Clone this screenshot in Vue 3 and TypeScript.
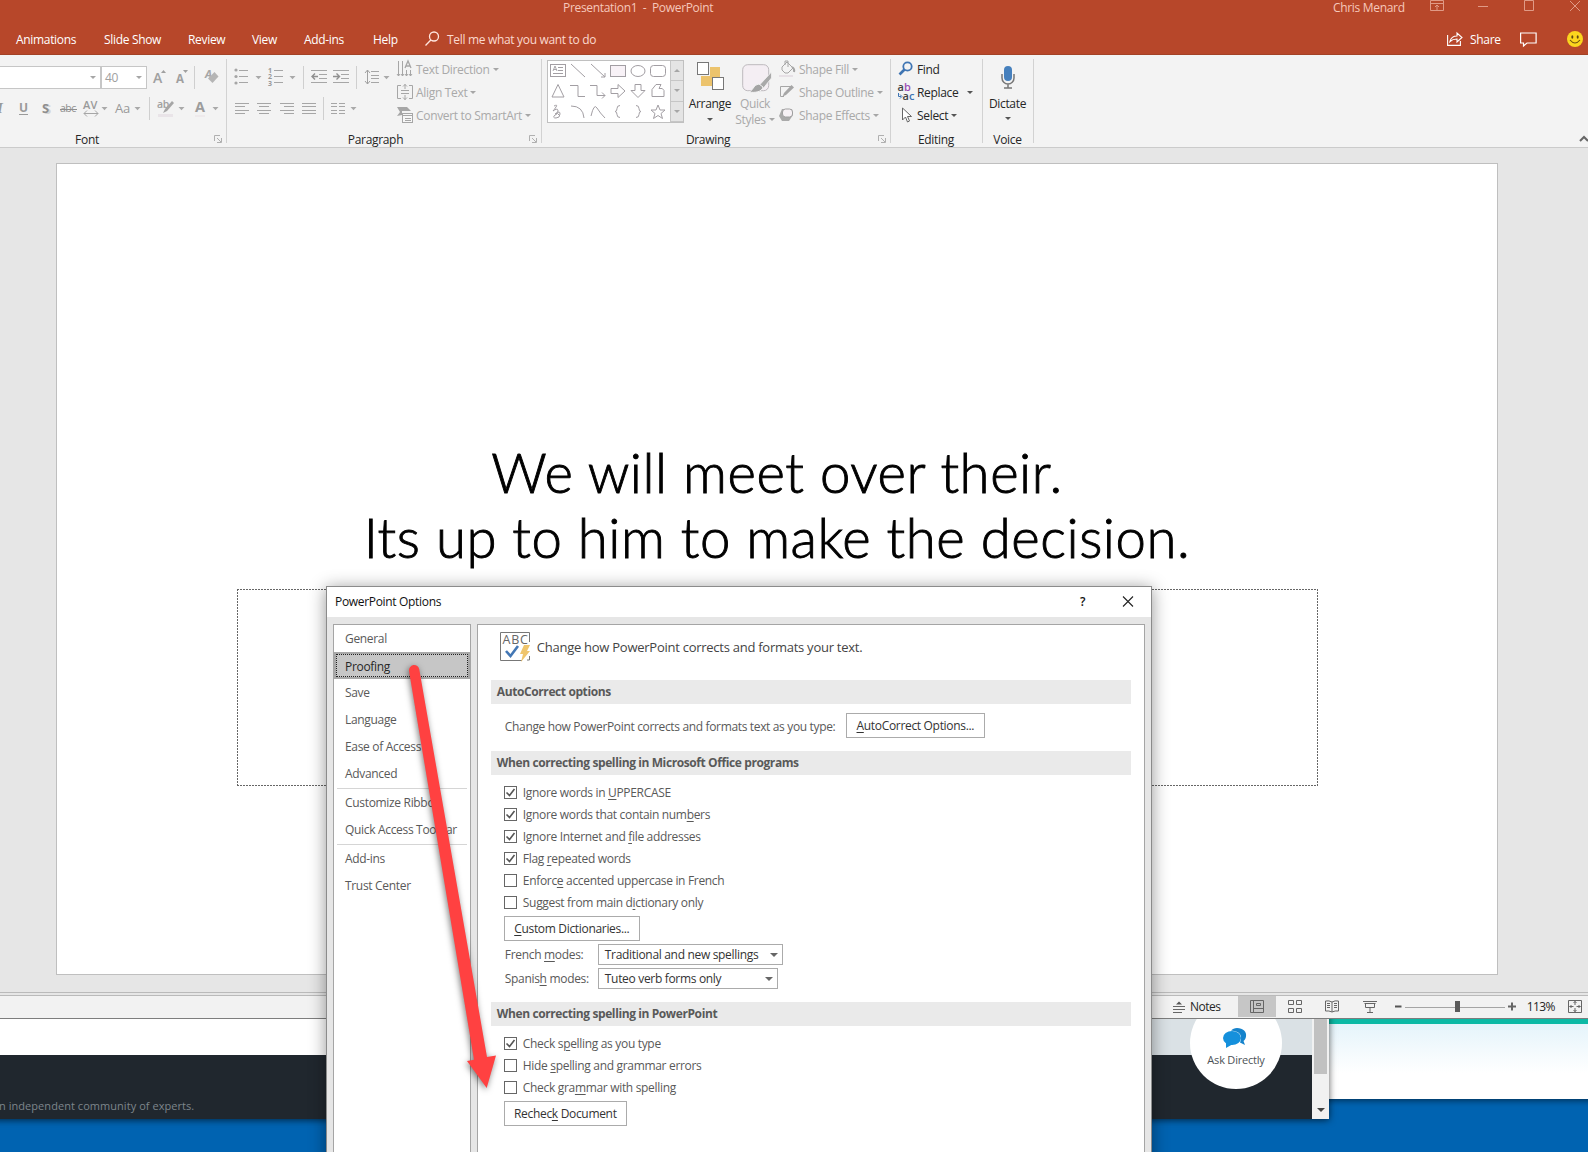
<script setup lang="ts">
interface Tool {
  gap: number
  w: number
  icon: string
}

const t = (gap: number, w: number, icon: string): Tool => ({ gap, w, icon })

const caret = '<path d="M-.5 10h6l-3 3.200z" fill="#a9a9a9"/>'
const rule = '<path d="M.5 0v23" stroke="#cfcfcf"/>'
const lines = (rows: number[][]): string =>
  rows.map(([x1, x2, y]) => `<path d="M${x1} ${y}.5H${x2}" stroke="#a6a6a6"/>`).join('')

const icons: Record<string, string> = {
  caret,
  rule,
  grow: '<text x="0" y="17" font-size="14" font-weight="600" fill="#a0a0a0">A</text><path d="M8 7l2.500-3L13 7z" fill="#a0a0a0"/>',
  shrink: '<text x="0" y="17" font-size="11.500" font-weight="700" fill="#a0a0a0">A</text><path d="M7 4h5l-2.500 3z" fill="#a0a0a0"/>',
  clear: '<text x="1" y="12" font-size="11" font-style="italic" font-weight="700" fill="#a6a6a6">A</text><path d="M10.500 6l4 4.500-6 6.500L4 12.500z" fill="#b5b5b5"/>',
  italic: '<text x="-3" y="16" font-size="15" font-style="italic" font-weight="700" font-family="Liberation Serif,serif" fill="#999">I</text>',
  underline: '<text x="0" y="15" font-size="12" font-weight="700" fill="#9a9a9a">U</text><path d="M0 17.500h9" stroke="#9a9a9a"/>',
  shadow: '<text x="2" y="17" font-size="13" font-weight="700" fill="#d5d5d5">S</text><text x="0" y="16" font-size="13" font-weight="700" fill="#8e8e8e">S</text>',
  strike: '<text x="0" y="15" font-size="10.500" textLength="16" fill="#8f8f8f">abc</text><path d="M0 12.500h17" stroke="#8f8f8f"/>',
  spacing: '<text x="0" y="12" font-size="11" font-weight="600" textLength="14" fill="#9a9a9a">AV</text><path d="M1 16.500h14M4 13.500l-3 3 3 3M12 13.500l3 3-3 3" stroke="#a6a6a6" fill="none"/>',
  casing: '<text x="0" y="16" font-size="13" textLength="15" fill="#999">Aa</text>',
  highlight: '<text x="0" y="11" font-size="10.500" font-weight="600" fill="#a0a0a0">ab</text><path d="M15 4l-7 8-2 4 4-2 7-8z" fill="#a6a6a6"/><path d="M1 17h15v3H1z" fill="#e9e4e8"/>',
  fontColor: '<text x="0" y="15" font-size="14.500" font-weight="700" fill="#9c9c9c">A</text><path d="M0 18h10v2H0z" fill="#eeeaec"/>',
  bullets: '<g fill="#a6a6a6"><circle cx="2" cy="4" r="1.600"/><circle cx="2" cy="10.500" r="1.600"/><circle cx="2" cy="17" r="1.600"/></g>' + lines([[5, 14, 4], [5, 14, 10], [5, 14, 16]]),
  numbers: '<g font-size="7" font-weight="700" fill="#999"><text x="0" y="6.500">1</text><text x="0" y="13">2</text><text x="0" y="19.500">3</text></g>' + lines([[6, 15, 4], [6, 15, 10], [6, 15, 16]]),
  outdent: lines([[0, 16, 4], [8, 16, 8], [8, 16, 12], [0, 16, 16]]) + '<path d="M1 10.500h6M4 7.500l-3 3 3 3" stroke="#8f8f8f" stroke-width="1.400" fill="none"/>',
  indent: lines([[0, 16, 4], [8, 16, 8], [8, 16, 12], [0, 16, 16]]) + '<path d="M0 10.500h6M3.500 7.500l3 3-3 3" stroke="#8f8f8f" stroke-width="1.400" fill="none"/>',
  leading: lines([[6, 14, 5], [6, 14, 9], [6, 14, 12], [6, 14, 16]]) + '<path d="M2.500 4v14M0 7l2.500-3L5 7M0 15l2.500 3L5 15" stroke="#a0a0a0" fill="none"/>',
  left: lines([[0, 14, 6], [0, 10, 9], [0, 14, 13], [0, 10, 16]]),
  center: lines([[0, 14, 6], [2, 12, 9], [0, 14, 13], [2, 12, 16]]),
  right: lines([[0, 14, 6], [4, 14, 9], [0, 14, 13], [4, 14, 16]]),
  justify: lines([[0, 14, 6], [0, 14, 9], [0, 14, 13], [0, 14, 16]]),
  columns: lines([[0, 6, 6], [8, 14, 6], [0, 6, 9], [8, 14, 9], [0, 6, 13], [8, 14, 13], [0, 6, 16], [8, 14, 16]]),
}

const fontTop: Tool[] = [t(6, 12, 'grow'), t(11, 11, 'shrink'), t(7, 1, 'rule'), t(9, 16, 'clear')]
const fontBottom: Tool[] = [
  t(0, 5, 'italic'), t(14, 9, 'underline'), t(14, 10, 'shadow'), t(8, 17, 'strike'), t(6, 16, 'spacing'),
  t(3, 5, 'caret'), t(8, 16, 'casing'), t(4, 5, 'caret'), t(9, 1, 'rule'), t(7, 17, 'highlight'),
  t(5, 5, 'caret'), t(11, 11, 'fontColor'), t(7, 5, 'caret'),
]
const paraTop: Tool[] = [
  t(7, 14, 'bullets'), t(8, 5, 'caret'), t(7, 16, 'numbers'), t(6, 5, 'caret'), t(8, 1, 'rule'),
  t(7, 16, 'outdent'), t(6, 16, 'indent'), t(7, 1, 'rule'), t(8, 14, 'leading'), t(5, 5, 'caret'),
]
const paraBottom: Tool[] = [
  t(8, 14, 'left'), t(8, 14, 'center'), t(9, 14, 'right'), t(8, 14, 'justify'), t(7, 1, 'rule'),
  t(7, 14, 'columns'), t(6, 5, 'caret'),
]

const shapes: string[] = [
  '<rect x="1.500" y="3.500" width="15" height="12"/><path d="M9 6.500h5M9 9.500h5M4 12.500h10"/><path d="M4 10l2-5 2 5M4.500 8.500h3" stroke-width=".9"/>',
  '<path d="M2 3l14 13"/>',
  '<path d="M2 3l14 13M16 12v4h-4"/>',
  '<rect x="1.500" y="4.500" width="15" height="11" fill="#f8f2f7"/>',
  '<ellipse cx="9" cy="10" rx="7" ry="5.500"/>',
  '<rect x="1.500" y="4.500" width="15" height="11" rx="3"/>',
  '<path d="M9 3.500l6 12.500H3z"/>',
  '<path d="M1 4.500h8v11h7"/>',
  '<path d="M1 4.500h7v10h8M13 11.500l3 3-3 3"/>',
  '<path d="M2 7.500h7V3.500l7 6.500-7 6.500v-4H2z"/>',
  '<path d="M6 3.500h6v6h4L9 16.500 2 9.500h4z"/>',
  '<path d="M3 8.500l4-5h5l-2 4q4-1 5 2v6H3z"/>',
  '<path d="M5 4q4-2 2 1t-3 4q4-3 5-1t-3 4M7 12q4-4 4 0t-4 4-1-3 4 0"/>',
  '<path d="M2 4q12 0 13 12"/>',
  '<path d="M2 14Q5 1 8 6t8 10"/>',
  '<path d="M11 3.500q-3 0-3 3t-2 3q2 0 2 3t3 3"/>',
  '<path d="M7 3.500q3 0 3 3t2 3q-2 0-2 3t-3 3"/>',
  '<path d="M9 3l2 5h5l-4 3.500 1.500 5L9 13.500l-4.500 3 1.500-5L2 8h5z"/>',
]

type NavItem = { label: string; active?: boolean; rule?: boolean }
const nav: NavItem[] = [
  { label: 'General' }, { label: 'Proofing', active: true }, { label: 'Save' }, { label: 'Language' },
  { label: 'Ease of Access' }, { label: 'Advanced' }, { label: 'Customize Ribbon', rule: true },
  { label: 'Quick Access Toolbar' }, { label: 'Add-ins', rule: true }, { label: 'Trust Center' },
]

type Check = { pre: string; key: string; post: string; on: boolean }
const c = (pre: string, key: string, post: string, on: boolean): Check => ({ pre, key, post, on })
const officeChecks: Check[] = [
  c('Ignore words in ', 'U', 'PPERCASE', true),
  c('Ignore words that contain num', 'b', 'ers', true),
  c('Ignore Internet and ', 'f', 'ile addresses', true),
  c('Flag ', 'r', 'epeated words', true),
  c('Enforc', 'e', ' accented uppercase in French', false),
  c('Suggest from main d', 'i', 'ctionary only', false),
]
const pptChecks: Check[] = [
  c('Check s', 'p', 'elling as you type', true),
  c('Hide ', 's', 'pelling and grammar errors', false),
  c('Check gra', 'm', 'mar with spelling', false),
]
const tabs = ['Animations', 'Slide Show', 'Review', 'View', 'Add-ins', 'Help']
</script>

<template>
  <div class="desktop">
    <div class="back-window"></div>

    <div class="browser">
      <div class="page">
        <div class="page-top"></div>
        <div class="page-foot">n independent community of experts.</div>
        <div class="ask">
          <svg width="24" height="20" viewBox="0 0 24 20">
            <path d="M14 0c6 0 10 4 9 8.500-.3 2-1.300 3.500-2.500 4.500l1.500 4-5-2.500C20 8 17 3 8 2.500 9.500 1 11.500 0 14 0z" fill="#1583cc" />
            <ellipse cx="9" cy="10" rx="9" ry="7" fill="#1590dc" /><path d="M3 14v6l7-4z" fill="#1590dc" />
          </svg>
          <span>Ask Directly</span>
        </div>
      </div>
      <div class="scroll"><div class="thumb"></div><i></i></div>
    </div>

    <div class="ppt">
      <header class="titlebar">
        <span class="doc">Presentation1&nbsp; -&nbsp; PowerPoint</span>
        <span class="user">Chris Menard</span>
        <svg class="winbtns" width="152" height="12" viewBox="0 0 152 12" fill="none" stroke="#e09a86">
          <path d="M.5.5h13v10H.5zM.5 3.500h13M7 10V5M5 7l2-2 2 2M48 6.500h10M94.500.5h9v10h-9zM140 1l10 10M150 1l-10 10" />
        </svg>
      </header>
      <nav class="tabs">
        <span v-for="tab in tabs" :key="tab" :class="'tab-' + tab.charAt(0) + tab.length">{{ tab }}</span>
        <svg class="lens" width="16" height="16" viewBox="0 0 16 16" fill="none" stroke="#ffe6df" stroke-width="1.300">
          <circle cx="9" cy="5.500" r="4.500" /><path d="M5.800 9L.5 14.500" />
        </svg>
        <span class="tell">Tell me what you want to do</span>
        <svg class="share-ic" width="16" height="14" viewBox="0 0 16 14" fill="none" stroke="#fff" stroke-width="1.100">
          <path d="M.6 3v10.400h12.800V9" /><path d="M3 9.500C4 5.500 6.500 4 10 4V1l5 4.500L10 10V7C7 7 5 7.500 3 9.500z" />
        </svg>
        <span class="share">Share</span>
        <svg class="comment" width="18" height="15" viewBox="0 0 18 15" fill="none" stroke="#fff" stroke-width="1.200">
          <path d="M.6 1h15.500v10H7L3.500 14v-3H.6z" />
        </svg>
        <svg class="smile" width="16" height="16" viewBox="0 0 16 16">
          <circle cx="8" cy="8" r="8" fill="#fbd51e" />
          <ellipse cx="5.300" cy="6" rx="1" ry="1.800" fill="#5f4512" /><ellipse cx="10.700" cy="6" rx="1" ry="1.800" fill="#5f4512" />
          <path d="M3 9q5 6 10 0" fill="none" stroke="#6b4c10" stroke-width="1.100" />
        </svg>
      </nav>

      <section class="ribbon">
        <div class="group g-font">
          <div class="body">
            <div class="tools top">
              <div class="combo face"><i class="car"></i></div>
              <div class="combo size"><span>40</span><i class="car"></i></div>
              <svg v-for="(k, i) in fontTop" :key="i" :width="k.w" height="23" :style="{ marginLeft: k.gap + 'px' }" v-html="icons[k.icon]"></svg>
            </div>
            <div class="tools bottom">
              <svg v-for="(k, i) in fontBottom" :key="i" :width="k.w" height="23" :style="{ marginLeft: k.gap + 'px' }" v-html="icons[k.icon]"></svg>
            </div>
          </div>
          <div class="caption">Font</div>
          <svg class="launch" width="8" height="8" viewBox="0 0 8 8"><path d="M.5 6V.5H6M3 3l4 4M7.500 3v4.500H3" fill="none" stroke="#b0b0b0" /></svg>
        </div>

        <div class="group g-para">
          <div class="body cols">
            <div class="left">
              <div class="tools top">
                <svg v-for="(k, i) in paraTop" :key="i" :width="k.w" height="23" :style="{ marginLeft: k.gap + 'px' }" v-html="icons[k.icon]"></svg>
              </div>
              <div class="tools bottom">
                <svg v-for="(k, i) in paraBottom" :key="i" :width="k.w" height="23" :style="{ marginLeft: k.gap + 'px' }" v-html="icons[k.icon]"></svg>
              </div>
            </div>
            <div class="stack off">
              <div>
                <svg width="16" height="16" viewBox="0 0 16 16" fill="none" stroke="#a6a6a6"><path d="M1.500 0v15M5.500 0v15M9.500 9v6M13.500 9v6M0 13l1.500 2L3 13M4 13l1.500 2L7 13M8 13l1.500 2 1.500-2M12 13l1.500 2 1.500-2" /><path d="M8 7l3-7 3 7M9 5h4" stroke-width="1.300" /></svg>
                <span>Text Direction</span><i class="car"></i>
              </div>
              <div>
                <svg width="16" height="16" viewBox="0 0 16 16" fill="none" stroke="#a6a6a6"><path d="M4 1.500H.5v13H4M12 1.500h3.500v13H12M4 6.500h8M4 9.500h8M8 0v5M8 16v-5M6 2.500L8 .5l2 2M6 13.500l2 2 2-2" /></svg>
                <span>Align Text</span><i class="car"></i>
              </div>
              <div>
                <svg width="16" height="16" viewBox="0 0 16 16"><path d="M0 0h10l4 4H5v4L0 9l3-4z" fill="#a6a6a6" /><rect x="5.500" y="6.500" width="10" height="9" fill="#f7f7f7" stroke="#a6a6a6" /><path d="M5 8.500h10M8 11.500h6M8 13.500h6" stroke="#a6a6a6" /></svg>
                <span>Convert to SmartArt</span><i class="car"></i>
              </div>
            </div>
          </div>
          <div class="caption">Paragraph</div>
          <svg class="launch" width="8" height="8" viewBox="0 0 8 8"><path d="M.5 6V.5H6M3 3l4 4M7.500 3v4.500H3" fill="none" stroke="#b0b0b0" /></svg>
        </div>

        <div class="group g-draw">
          <div class="body cols">
            <div class="gallery">
              <div class="cells">
                <svg v-for="(s, i) in shapes" :key="i" width="18" height="20" viewBox="0 0 18 20" fill="none" stroke="#a29ea3" v-html="s"></svg>
              </div>
              <div class="steps"><b><i class="car up"></i></b><b><i class="car"></i></b><b><i class="car more"></i></b></div>
            </div>
            <div class="big arrange">
              <svg width="27" height="28" viewBox="0 0 27 28"><path d="M13 5h10v10H13zM4 14h11v10H4z" fill="#ecc36c" /><rect x=".5" y=".5" width="11" height="12" fill="#fff" stroke="#777" /><rect x="15.500" y="15.500" width="11" height="12" fill="#fff" stroke="#777" /></svg>
              <span>Arrange</span><i class="car dark"></i>
            </div>
            <div class="big quick">
              <svg width="30" height="30" viewBox="0 0 30 30"><rect x=".7" y=".7" width="26" height="26" rx="5" fill="#f4eef3" stroke="#bdb9bd" /><path d="M29.500 8v6l-8 10-4-3z" fill="#a9a9a9" stroke="#f3f3f3" stroke-width=".8" /><path d="M17 20l4 3c-1 5-8 6-14 5 4-1 4-7 10-8z" fill="#a4a4a4" stroke="#f3f3f3" /></svg>
              <span>Quick</span><span>Styles<i class="car"></i></span>
            </div>
            <div class="stack off">
              <div>
                <svg width="17" height="16" viewBox="0 0 17 16" fill="none" stroke="#a6a6a6"><path d="M3 6l5-5 6 6-5 5H6L3 9zM6 4V0h3V6" /><path d="M13 6q3 2 2 5" stroke-width="2" /><path d="M0 15h14" stroke="#e6e0e5" stroke-width="2" /></svg>
                <span>Shape Fill</span><i class="car"></i>
              </div>
              <div>
                <svg width="17" height="16" viewBox="0 0 17 16"><path d="M12 2.500H1.500v10H5" fill="none" stroke="#a6a6a6" /><path d="M12.500 1L15 3.500 7 11l-3.500 1.500L5 9z" fill="#a6a6a6" /></svg>
                <span>Shape Outline</span><i class="car"></i>
              </div>
              <div>
                <svg width="17" height="16" viewBox="0 0 17 16"><path d="M3 2h10l1 6-4 6H3l-3-5z" fill="#aaa" /><rect x="3.500" y="2" width="10" height="8" rx="3" fill="#f6f1f5" stroke="#9f9f9f" /></svg>
                <span>Shape Effects</span><i class="car"></i>
              </div>
            </div>
          </div>
          <div class="caption">Drawing</div>
          <svg class="launch" width="8" height="8" viewBox="0 0 8 8"><path d="M.5 6V.5H6M3 3l4 4M7.500 3v4.500H3" fill="none" stroke="#b0b0b0" /></svg>
        </div>

        <div class="group g-edit">
          <div class="stack">
            <div>
              <svg width="16" height="16" viewBox="0 0 16 16" fill="none" stroke="#3f75b3"><circle cx="9.500" cy="5.500" r="4.200" stroke-width="1.800" /><path d="M6.500 8.500L1.500 13.500" stroke-width="2.600" /></svg>
              <span>Find</span>
            </div>
            <div>
              <svg width="16" height="16" viewBox="0 0 16 16" font-size="11" font-weight="600" letter-spacing="0"><text x="-.5" y="7" fill="#444">a<tspan fill="#9b4fb5">b</tspan></text><text x="4.500" y="15.500" fill="#444">a<tspan fill="#3f75b3">c</tspan></text><path d="M.5 9v3.500H3M2 10.500l2 2-2 2" fill="none" stroke="#3f75b3" /></svg>
              <span>Replace</span><i class="car dark far"></i>
            </div>
            <div>
              <svg width="16" height="16" viewBox="0 0 16 16"><path d="M4.500 1v12l3-3 2 5 2-1-2-4.500h4z" fill="#fff" stroke="#666" /></svg>
              <span>Select</span><i class="car dark"></i>
            </div>
          </div>
          <div class="caption">Editing</div>
        </div>

        <div class="group g-voice">
          <div class="big mic">
            <svg width="14" height="24" viewBox="0 0 14 24"><rect x="3" y="0" width="8" height="15" rx="4" fill="#4680bd" /><path d="M1 8v4a6 6 0 0 0 12 0V8M7 18v4M3 22h8" fill="none" stroke="#777" stroke-width="1.500" /></svg>
            <span>Dictate</span><i class="car dark"></i>
          </div>
          <div class="caption">Voice</div>
        </div>
        <svg class="collapse" width="10" height="7" viewBox="0 0 10 7"><path d="M1 6l4-4 4 4" fill="none" stroke="#666" stroke-width="2" /></svg>
      </section>

      <main class="work">
        <div class="slide">
          <h1><span>We will meet over their.</span><span>Its up to him to make the decision.</span></h1>
          <div class="placeholder"></div>
        </div>
      </main>

      <footer class="status">
        <svg class="notes-ic" width="12" height="12" viewBox="0 0 12 12"><path d="M3 3.500L6 .5l3 3z" fill="#555" /><path d="M0 5.500h12M0 8.500h12M0 11.500h9" stroke="#666" /></svg>
        <span class="notes">Notes</span>
        <span class="view active"><svg width="14" height="13" viewBox="0 0 14 13" fill="none" stroke="#666"><path d="M.5.5h13v12H.5zM3.500.5v12M3.500 8.500h10M6.500 3.500h4v2h-4z" /></svg></span>
        <span class="view"><svg width="14" height="13" viewBox="0 0 14 13" fill="none" stroke="#666"><path d="M.5.5h5v4h-5zM8.500.5h5v4h-5zM.5 8.500h5v4h-5zM8.500 8.500h5v4h-5z" /></svg></span>
        <span class="view"><svg width="14" height="13" viewBox="0 0 14 13" fill="none" stroke="#666"><path d="M7 2Q4 .3.5 1v10Q4 10.500 7 12q3-1.500 6.500-1V1Q10 .3 7 2zv10M2 3.500h3M2 5.500h3M2 7.500h3M9 3.500h3M9 5.500h3M9 7.500h3" /></svg></span>
        <span class="view"><svg width="14" height="13" viewBox="0 0 14 13" fill="none" stroke="#666"><path d="M0 1.500h14M1.500 3.500h11M2.500 3.500v4h9v-4M7 7.500v5M4 12.500h6" /></svg></span>
        <svg class="zoom" width="122" height="13" viewBox="0 0 122 13"><path d="M0 6.500h6.500" stroke="#555" stroke-width="2" /><path d="M10 7.500h100" stroke="#a5a5a5" /><path d="M60 1h5v11h-5z" fill="#5b5b5b" /><path d="M113 6.500h8M117 2.500v8" stroke="#666" stroke-width="2" /></svg>
        <span class="pct">113%</span>
        <svg width="14" height="13" viewBox="0 0 14 13" fill="none" stroke="#666"><path d="M.5.5h13v12H.5zM7 1v4M7 8v4M1.500 6.500h4M8.500 6.500h4M5.500 3L7 1.500 8.500 3M5.500 10L7 11.500 8.500 10M3.500 5L2 6.500 3.500 8M10.500 5L12 6.500 10.500 8" /></svg>
      </footer>
    </div>

    <div class="dialog">
      <div class="dlg-title">
        <span>PowerPoint Options</span>
        <b>?</b>
        <svg width="12" height="12" viewBox="0 0 12 12"><path d="M1 .5l10 10M11 .5L1 10.500" stroke="#222" stroke-width="1.100" /></svg>
      </div>
      <div class="dlg-body">
        <ul class="nav">
          <li v-for="n in nav" :key="n.label" :class="{ active: n.active, rule: n.rule }"><span>{{ n.label }}</span></li>
        </ul>
        <div class="panel">
          <div class="intro">
            <svg width="32" height="31" viewBox="0 0 32 31">
              <path d="M22 28.500H.5V.5h29V10M29.500 24v4H27" fill="none" stroke="#777" />
              <text x="2.500" y="12" font-size="12.500" font-weight="500" textLength="25" fill="#666">ABC</text>
              <path d="M6 19l4.500 5L18 14" fill="none" stroke="#4377b5" stroke-width="2.600" />
              <path d="M24 13h6l-3 6h3L21 30l2-8h-3z" fill="#efc56d" />
            </svg>
            <span>Change how PowerPoint corrects and formats your text.</span>
          </div>
          <h2>AutoCorrect options</h2>
          <div class="auto">
            <span>Change how PowerPoint corrects and formats text as you type:</span>
            <button><u>A</u>utoCorrect Options...</button>
          </div>
          <h2>When correcting spelling in Microsoft Office programs</h2>
          <div class="checks">
            <label v-for="k in officeChecks" :key="k.post"><i><svg v-if="k.on" width="11" height="11" viewBox="0 0 11 11"><path d="M1.500 5.500l3 3L9.500 2" fill="none" stroke="#555" stroke-width="1.600" /></svg></i><span>{{ k.pre }}<u>{{ k.key }}</u>{{ k.post }}</span></label>
          </div>
          <button class="custom"><u>C</u>ustom Dictionaries...</button>
          <div class="mode"><span>French <u>m</u>odes:</span><div class="select french"><span>Traditional and new spellings</span><i></i></div></div>
          <div class="mode"><span>Spanis<u>h</u> modes:</span><div class="select spanish"><span>Tuteo verb forms only</span><i></i></div></div>
          <h2 class="last">When correcting spelling in PowerPoint</h2>
          <div class="checks">
            <label v-for="k in pptChecks" :key="k.post"><i><svg v-if="k.on" width="11" height="11" viewBox="0 0 11 11"><path d="M1.500 5.500l3 3L9.500 2" fill="none" stroke="#555" stroke-width="1.600" /></svg></i><span>{{ k.pre }}<u>{{ k.key }}</u>{{ k.post }}</span></label>
          </div>
          <button class="recheck">Rechec<u>k</u> Document</button>
        </div>
      </div>
    </div>

    <svg class="arrow" width="110" height="440" viewBox="400 660 110 440">
      <path d="M409 671a5.200 5.200 0 0 1 10.300-1.500L487 1057l9-1.500L486.700 1088 467 1061l7-1.300z" fill="#ff4141" />
    </svg>
  </div>
</template>

<style>
html,
body {
  margin: 0;
  overflow: hidden;
}
</style>

<style scoped>
* {
  box-sizing: border-box;
}
.desktop {
  position: relative;
  width: 1588px;
  height: 1152px;
  overflow: hidden;
  background: #0063b1;
  font-family: 'Open Sans', 'Noto Sans', sans-serif;
  font-size: 12px;
  letter-spacing: -0.32px;
  color: #262626;
  white-space: nowrap;
}
svg {
  display: block;
  flex: none;
  overflow: visible;
}
.back-window {
  position: absolute;
  left: 1200px;
  top: 1010px;
  width: 400px;
  height: 89px;
  border-top: 14px solid #0cb9a5;
  background: linear-gradient(#e5f4fb, #fff 65%);
  box-shadow: 0 1px 7px rgba(0, 0, 0, 0.6);
}
.browser {
  position: absolute;
  left: -10px;
  top: 1000px;
  width: 1339px;
  height: 119px;
  display: flex;
  box-shadow: 0 1px 7px rgba(0, 0, 0, 0.65);
}
.page {
  position: relative;
  flex: 1;
  overflow: hidden;
}
.page-top {
  height: 55px;
  background: linear-gradient(90deg, #fff 700px, #dae1e5 700px);
}
.page-foot {
  height: 64px;
  background: #20272e;
  padding: 41px 0 0 9px;
  color: #7d858b;
  font-size: 11px;
  line-height: 20px;
  letter-spacing: 0.05px;
}
.ask {
  position: absolute;
  left: 1200px;
  top: -3px;
  width: 92px;
  height: 92px;
  border-radius: 50%;
  background: #fff;
  display: flex;
  flex-direction: column;
  align-items: center;
  padding-top: 31px;
  color: #4c5256;
  font-size: 11px;
  letter-spacing: -0.2px;
}
.ask svg {
  margin-left: -3px;
}
.ask span {
  line-height: 16px;
  margin-top: 4px;
}
.scroll {
  width: 17px;
  background: #f1f1f1;
  display: flex;
  flex-direction: column;
  align-items: center;
}
.thumb {
  width: 13px;
  height: 74px;
  background: #c1c1c1;
}
.scroll i {
  margin-top: 34px;
  border: 4px solid transparent;
  border-top-color: #444;
  border-bottom: 0;
}
.ppt {
  position: absolute;
  left: 0;
  top: 0;
  width: 1588px;
  height: 1019px;
  display: flex;
  flex-direction: column;
  background: #e6e6e6;
  border-bottom: 1px solid #7d7d7d;
}
.titlebar {
  height: 24px;
  display: flex;
  background: #b7472a;
  color: #f6c8bb;
  line-height: 15px;
}
.doc {
  width: 770px;
  padding-left: 563px;
}
.user {
  width: 660px;
  padding-left: 563px;
}
.tabs {
  height: 31px;
  display: flex;
  align-items: center;
  background: #b7472a;
  border-bottom: 1px solid #a34226;
  color: #fff;
  padding-left: 16px;
}
.tabs > span {
  flex: none;
  padding-top: 2px;
}
.tab-A10 {
  width: 88px;
}
.tab-S10 {
  width: 84px;
}
.tab-R6 {
  width: 64px;
}
.tab-V4 {
  width: 52px;
}
.tab-A7 {
  width: 69px;
}
.tab-H4 {
  width: 52px;
}
.tabs > svg {
  margin-top: 1px;
}
.tell {
  width: 1000px;
  margin-left: 6px;
  color: #fbd9cf;
}
.share {
  width: 50px;
  margin-left: 7px;
}
.tabs > .smile {
  margin-left: 29px;
}
.ribbon {
  height: 93px;
  display: flex;
  background: #f3f3f3;
  border-bottom: 1px solid #cbcbcb;
}
.group {
  position: relative;
  display: flex;
  flex-direction: column;
  flex: none;
  padding-top: 6px;
}
.group::after {
  content: '';
  position: absolute;
  right: 0;
  top: 4px;
  bottom: 4px;
  width: 1px;
  background: #d2d2d2;
}
.g-font {
  width: 227px;
}
.g-para {
  width: 315px;
}
.g-draw {
  width: 349px;
}
.g-edit {
  width: 92px;
}
.g-voice {
  width: 51px;
}
.body {
  height: 69px;
}
.cols {
  display: flex;
}
.caption {
  position: absolute;
  left: 0;
  bottom: -1px;
  width: 100%;
  text-align: center;
  line-height: 16px;
}
.g-font .caption {
  width: 174px;
}
.g-para .caption {
  width: 297px;
}
.g-draw .caption {
  width: 332px;
}
.g-edit .caption,
.g-voice .caption {
  width: calc(100% - 2px);
}
.launch {
  position: absolute;
  right: 5px;
  bottom: 4px;
}
.tools {
  display: flex;
  height: 23px;
}
.tools.top {
  margin-top: 5px;
}
.tools.bottom {
  margin-top: 8px;
}
.combo {
  display: flex;
  align-items: center;
  justify-content: space-between;
  height: 23px;
  background: #fff;
  border: 1px solid #c6c6c6;
  color: #a0a0a0;
  padding: 0 4px 0 3px;
}
.face {
  width: 101px;
  border-left: 0;
  justify-content: flex-end;
}
.size {
  width: 46px;
}
.car {
  display: inline-block;
  flex: none;
  width: 0;
  height: 0;
  border: 3px solid transparent;
  border-top: 3px solid #a6a6a6;
  border-bottom: 0;
}
.car.dark {
  border-top-color: #555;
}
.car.up {
  transform: scaleY(-1);
}
.left {
  width: 170px;
}
.stack > div {
  display: flex;
  align-items: center;
  height: 23px;
}
.stack {
  margin-top: -3px;
}
.stack > div > span {
  margin: 0 3px 0 3px;
}
.off {
  color: #a9a9a9;
}
.gallery {
  display: flex;
  width: 137px;
  height: 63px;
  margin: -1px 0 0 5px;
  background: #fff;
  border: 1px solid #c0c0c0;
}
.cells {
  display: grid;
  grid-template-columns: repeat(6, 20px);
  width: 122px;
  height: 61px;
  padding-left: 1px;
}
.steps {
  width: 13px;
}
.steps b {
  display: flex;
  align-items: center;
  justify-content: center;
  height: 20.33px;
  background: #e4e4e4;
  border-left: 1px solid #c6c6c6;
  border-bottom: 1px solid #c6c6c6;
}
.big {
  display: flex;
  flex-direction: column;
  align-items: center;
}
.big span {
  line-height: 16px;
}
.arrange {
  width: 44px;
  margin-left: 4px;
  padding-top: 1px;
}
.arrange span {
  margin-top: 6px;
}
.big > .car {
  margin-top: 6px;
}
.quick {
  width: 44px;
  margin-left: 1px;
  padding-top: 3px;
  color: #a9a9a9;
}
.quick svg {
  margin-left: 3px;
}
.quick span:nth-of-type(1) {
  margin-top: 2px;
}
.quick .car {
  margin: 0 0 3px 3px;
}
.g-draw .stack {
  margin-left: 2px;
}
.g-edit .stack {
  padding-left: 7px;
}
.g-edit .far {
  margin-left: 6px;
}
.mic {
  padding: 5px 2px 0 0;
}
.mic span {
  margin-top: 6px;
}
.big.mic > .car {
  margin-top: 5px;
}
.collapse {
  margin: 80px 0 0 545px;
}
.work {
  height: 846px;
  border-bottom: 1px solid #bababa;
  padding: 15px 0 0 56px;
}
.slide {
  width: 1442px;
  height: 812px;
  background: #fff;
  border: 1px solid #bfbfbf;
}
h1 {
  margin: 0;
  height: 425px;
  padding-top: 276px;
  display: flex;
  flex-direction: column;
  align-items: center;
  font: 300 54.500px/65px Lato, sans-serif;
  letter-spacing: 0.55px;
  color: #000;
  -webkit-text-stroke: 0.9px #000;
}
.placeholder {
  width: 1081px;
  height: 197px;
  margin-left: 180px;
  background:
    repeating-linear-gradient(90deg, #666 0 2px, transparent 2px 3px) 0 0 / 100% 1px no-repeat,
    repeating-linear-gradient(90deg, #666 0 2px, transparent 2px 3px) 0 100% / 100% 1px no-repeat,
    repeating-linear-gradient(#666 0 2px, transparent 2px 3px) 0 0 / 1px 100% no-repeat,
    repeating-linear-gradient(#666 0 2px, transparent 2px 3px) 100% 0 / 1px 100% no-repeat;
}
.status {
  height: 23px;
  margin-top: 2px;
  border-top: 1px solid #bababa;
  background: #f2f2f2;
  display: flex;
  align-items: center;
  padding: 0 0 1px 1173px;
}
.notes {
  width: 48px;
  margin-left: 5px;
  letter-spacing: -0.5px;
}
.view {
  display: flex;
  align-items: center;
  justify-content: center;
  width: 37.7px;
  height: 21px;
}
.view.active {
  background: #c6c6c6;
}
.zoom {
  margin-left: 6px;
}
.pct {
  width: 41px;
  margin-left: 10px;
  letter-spacing: -0.6px;
}
.dialog {
  position: absolute;
  left: 326px;
  top: 586px;
  width: 826px;
  height: 600px;
  border: 1px solid #8b8b8b;
  background: #e6e6e6;
  box-shadow: 0 2px 16px rgba(0, 0, 0, 0.42);
}
.dlg-title {
  height: 30px;
  display: flex;
  align-items: center;
  background: #fff;
  padding: 0 0 1px 8px;
  color: #111;
}
.dlg-title span {
  width: 745px;
}
.dlg-title b {
  width: 42px;
  font-weight: 600;
}
.dlg-body {
  display: flex;
  padding: 7px 6px 0;
}
.nav {
  list-style: none;
  margin: 0 6px 0 0;
  padding: 0;
  width: 138px;
  height: 600px;
  background: #fff;
  border: 1px solid #a5a5a5;
  color: #595959;
}
.nav li {
  height: 27px;
  line-height: 28px;
  padding-left: 11px;
}
.nav li.rule {
  height: 29px;
  padding-top: 2px;
  background: linear-gradient(#d5d5d5, #d5d5d5) 3px 1px / 130px 1px no-repeat;
}
.nav li.active {
  padding: 2px;
  background: #a8a8a8;
  color: #262626;
}
.nav li.active span {
  display: block;
  height: 23px;
  line-height: 23px;
  padding-left: 8px;
  border: 1px dotted #222;
  background: #c6c6c6;
}
.panel {
  width: 669px;
  height: 600px;
  background: #fff;
  border: 1px solid #a5a5a5;
  padding: 7px 13px;
  color: #595959;
}
.intro {
  display: flex;
  height: 48px;
  padding-left: 9px;
}
.intro span {
  margin-left: 5px;
  line-height: 31px;
  font-size: 13px;
  color: #444;
  letter-spacing: -0.26px;
}
h2 {
  margin: 0;
  width: 640px;
  height: 24px;
  line-height: 23px;
  padding-left: 6px;
  background: #eaeaea;
  color: #595959;
  font-size: 12px;
  font-weight: 700;
  letter-spacing: -0.4px;
}
.auto {
  display: flex;
  align-items: center;
  height: 47px;
  padding: 0 0 4px 14px;
}
.auto span {
  width: 341px;
  padding-top: 1px;
  letter-spacing: -0.345px;
}
button {
  display: block;
  height: 25px;
  padding: 0;
  text-align: center;
  background: #fff;
  border: 1px solid #ababab;
  font: inherit;
  letter-spacing: inherit;
  color: #333;
}
.auto button {
  width: 139px;
}
u {
  text-underline-offset: 2px;
}
.checks {
  height: 139px;
  padding: 6px 0 0 13px;
}
.last + .checks {
  height: 73px;
}
.checks label {
  display: flex;
  align-items: center;
  height: 22px;
}
.checks i {
  width: 13px;
  height: 13px;
  border: 1px solid #666;
}
.checks span {
  margin-left: 6px;
}
.custom {
  width: 136px;
  margin: 2px 0 3px 13px;
}
.mode {
  display: flex;
  height: 24px;
  padding-left: 14px;
}
.mode > span {
  width: 93px;
  line-height: 22px;
}
.select {
  display: flex;
  align-items: center;
  justify-content: space-between;
  height: 21px;
  padding: 0 4px 0 6px;
  border: 1px solid #ababab;
  color: #333;
}
.french {
  width: 185px;
}
.spanish {
  width: 180px;
}
.select i {
  border: 4px solid transparent;
  border-top-color: #666;
  border-bottom: 0;
}
.last {
  margin-top: 10px;
}
.recheck {
  width: 123px;
  margin: 2px 0 0 13px;
}
.arrow {
  position: absolute;
  left: 400px;
  top: 660px;
  filter: drop-shadow(-1px 2px 3px rgba(0, 0, 0, 0.5));
}
</style>
